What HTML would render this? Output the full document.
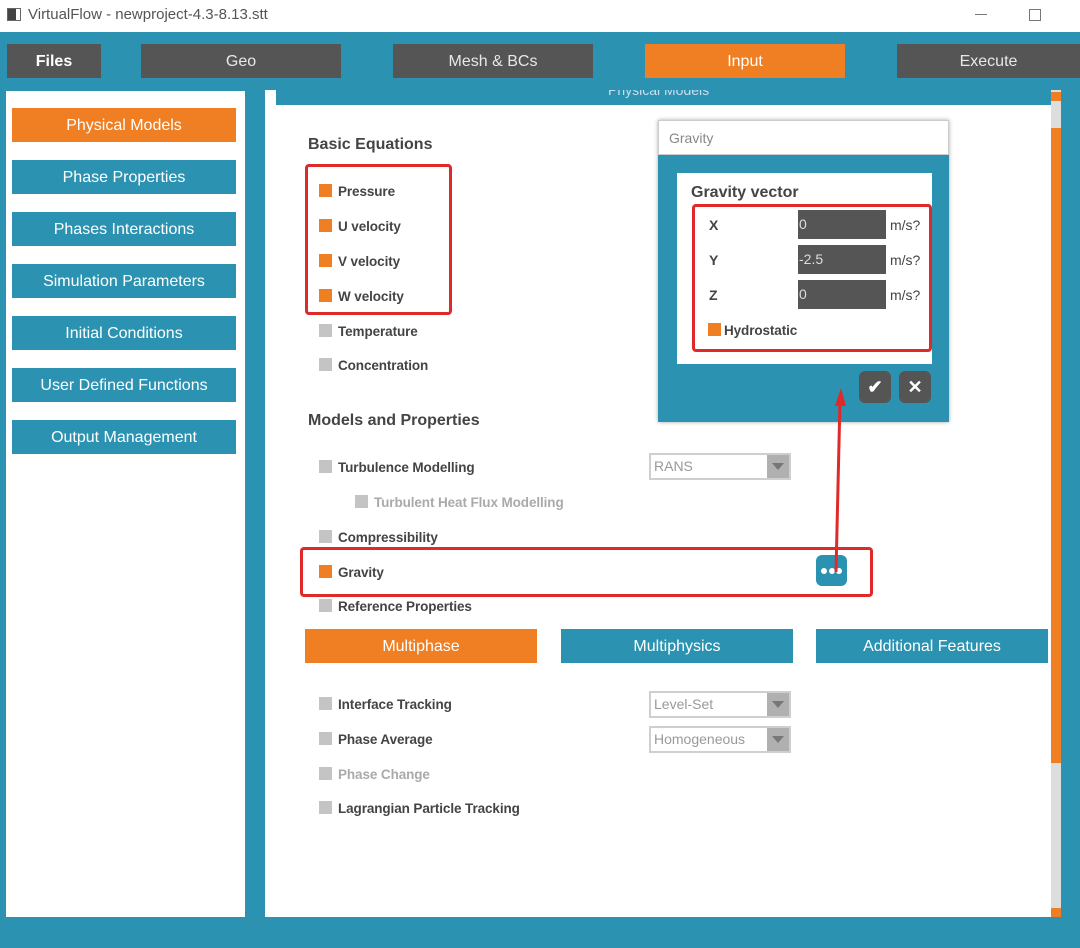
<!DOCTYPE html>
<html><head><style>
*{margin:0;padding:0;box-sizing:border-box}
body{width:1080px;height:948px;background:#2b93b1;position:relative;overflow:hidden;font-family:"Liberation Sans",Arial,sans-serif}
.a{position:absolute}
.tb{background:#fff;left:0;top:0;width:1080px;height:32px}
.tab{position:absolute;top:44px;height:34px;background:#555;color:#e8e8e8;font-size:16px;text-align:center;line-height:35px}
.lb{position:absolute;left:12px;width:224px;height:34px;background:#2b93b1;color:#fff;font-size:16px;text-align:center;line-height:35px}
.row{position:absolute;font-size:13.5px;font-weight:bold;color:#444;line-height:16px;white-space:nowrap;letter-spacing:-0.1px}
.row i{display:inline-block;width:13px;height:13px;background:#c4c4c4;vertical-align:-1px;margin-right:6px}
.row i.o{background:#ef7f22}
.h{position:absolute;font-size:16px;font-weight:bold;color:#444}
.dd{position:absolute;left:649px;width:142px;height:27px;border:2px solid #cfcfcf;background:#fff;color:#999;font-size:14px;line-height:23px;padding-left:3px}
.dd b{position:absolute;right:0;top:0;width:22px;height:23px;background:#b0b0b0}
.dd b:after{content:"";position:absolute;left:5px;top:8px;border-left:6px solid transparent;border-right:6px solid transparent;border-top:7px solid #777}
.bt{position:absolute;top:629px;width:232px;height:34px;color:#fff;font-size:16px;text-align:center;line-height:35px}
.red{position:absolute;border:3px solid #e02a2a;border-radius:4px}
.in{position:absolute;left:798px;width:88px;height:29px;background:#555;color:#ddd;font-size:14px;line-height:29px;padding-left:1px}
.un{position:absolute;left:890px;font-size:14px;color:#444}
.lab{position:absolute;left:709px;font-size:14px;font-weight:bold;color:#444}
.dot{position:absolute;top:13px;width:6px;height:6px;border-radius:50%;background:#fff}
</style></head><body>
<div class="a tb"></div>
<div class="a" style="left:7px;top:8px;width:14px;height:13px;border:1px solid #666;background:#fff"><div style="width:8px;height:11px;background:#444"></div></div>
<div class="a" style="left:28px;top:6px;font-size:15px;color:#555">VirtualFlow - newproject-4.3-8.13.stt</div>
<div class="a" style="left:975px;top:14px;width:12px;height:1px;background:#777"></div>
<div class="a" style="left:1029px;top:9px;width:12px;height:12px;border:1px solid #777"></div>

<div class="tab" style="left:7px;width:94px;font-weight:bold;color:#fff">Files</div>
<div class="tab" style="left:141px;width:200px">Geo</div>
<div class="tab" style="left:393px;width:200px">Mesh &amp; BCs</div>
<div class="tab" style="left:645px;width:200px;background:#ef7f22;color:#fff">Input</div>
<div class="tab" style="left:897px;width:183px">Execute</div>

<div class="a" style="left:6px;top:91px;width:239px;height:826px;background:#fff"></div>
<div class="lb" style="top:108px;background:#ef7f22">Physical Models</div>
<div class="lb" style="top:160px">Phase Properties</div>
<div class="lb" style="top:212px">Phases Interactions</div>
<div class="lb" style="top:264px">Simulation Parameters</div>
<div class="lb" style="top:316px">Initial Conditions</div>
<div class="lb" style="top:368px">User Defined Functions</div>
<div class="lb" style="top:420px">Output Management</div>

<div class="a" style="left:265px;top:90px;width:786px;height:827px;background:#fff"></div>
<div class="a" style="left:276px;top:90px;width:775px;height:15px;background:#2b93b1;overflow:hidden"><div style="position:absolute;left:332px;top:-8px;color:#cde;font-size:14px">Physical Models</div></div>
<div class="a" style="left:1051px;top:90px;width:10px;height:827px;background:#ddd"></div>
<div class="a" style="left:1051px;top:92px;width:10px;height:9px;background:#ef7f22"></div>
<div class="a" style="left:1051px;top:128px;width:10px;height:635px;background:#ef7f22"></div>
<div class="a" style="left:1051px;top:908px;width:10px;height:9px;background:#ef7f22"></div>

<div class="h" style="left:308px;top:136px">Basic Equations</div>
<div class="row" style="left:319px;top:184px"><i class="o"></i>Pressure</div>
<div class="row" style="left:319px;top:219px"><i class="o"></i>U velocity</div>
<div class="row" style="left:319px;top:254px"><i class="o"></i>V velocity</div>
<div class="row" style="left:319px;top:289px"><i class="o"></i>W velocity</div>
<div class="row" style="left:319px;top:324px"><i></i>Temperature</div>
<div class="row" style="left:319px;top:358px"><i></i>Concentration</div>
<div class="h" style="left:308px;top:412px">Models and Properties</div>
<div class="row" style="left:319px;top:460px"><i></i>Turbulence Modelling</div>
<div class="row" style="left:355px;top:495px;color:#aaa"><i></i>Turbulent Heat Flux Modelling</div>
<div class="row" style="left:319px;top:530px"><i></i>Compressibility</div>
<div class="row" style="left:319px;top:565px"><i class="o"></i>Gravity</div>
<div class="row" style="left:319px;top:599px"><i></i>Reference Properties</div>
<div class="dd" style="top:453px">RANS<b></b></div>
<div class="a" style="left:816px;top:555px;width:31px;height:31px;border-radius:6px;background:#2b93b1"><div class="dot" style="left:5px"></div><div class="dot" style="left:12.5px"></div><div class="dot" style="left:20px"></div></div>

<div class="bt" style="left:305px;background:#ef7f22">Multiphase</div>
<div class="bt" style="left:561px;background:#2b93b1">Multiphysics</div>
<div class="bt" style="left:816px;background:#2b93b1">Additional Features</div>

<div class="row" style="left:319px;top:697px"><i></i>Interface Tracking</div>
<div class="row" style="left:319px;top:732px"><i></i>Phase Average</div>
<div class="row" style="left:319px;top:767px;color:#aaa"><i></i>Phase Change</div>
<div class="row" style="left:319px;top:801px"><i></i>Lagrangian Particle Tracking</div>
<div class="dd" style="top:691px">Level-Set<b></b></div>
<div class="dd" style="top:726px">Homogeneous<b></b></div>

<div class="a" style="left:658px;top:120px;width:291px;height:302px;background:#2b93b1;box-shadow:0 0 4px rgba(0,0,0,.35)"></div>
<div class="a" style="left:658px;top:120px;width:291px;height:35px;background:#fff;border:1px solid #ccc;color:#888;font-size:14px;line-height:34px;padding-left:10px">Gravity</div>
<div class="a" style="left:677px;top:173px;width:255px;height:191px;background:#fff"></div>
<div class="h" style="left:691px;top:184px">Gravity vector</div>
<div class="lab" style="top:217px">X</div><div class="in" style="top:210px">0</div><div class="un" style="top:217px">m/s?</div>
<div class="lab" style="top:252px">Y</div><div class="in" style="top:245px">-2.5</div><div class="un" style="top:252px">m/s?</div>
<div class="lab" style="top:287px">Z</div><div class="in" style="top:280px">0</div><div class="un" style="top:287px">m/s?</div>
<div class="row" style="left:708px;top:323px"><i class="o" style="margin-right:3px"></i>Hydrostatic</div>
<div class="a" style="left:859px;top:371px;width:32px;height:32px;border-radius:6px;background:#555;color:#fff;font-size:18px;text-align:center;line-height:32px;font-weight:bold">✔</div>
<div class="a" style="left:899px;top:371px;width:32px;height:32px;border-radius:6px;background:#555;color:#fff;font-size:18px;text-align:center;line-height:32px;font-weight:bold">✕</div>

<div class="red" style="left:305px;top:164px;width:147px;height:151px"></div>
<div class="red" style="left:300px;top:547px;width:573px;height:50px"></div>
<div class="red" style="left:692px;top:204px;width:240px;height:148px"></div>
<svg class="a" style="left:0;top:0" width="1080" height="948"><line x1="836" y1="572" x2="840" y2="400" stroke="#e02a2a" stroke-width="3"/><polygon points="841,388 835,406 846,406" fill="#e02a2a"/></svg>
</body></html>
